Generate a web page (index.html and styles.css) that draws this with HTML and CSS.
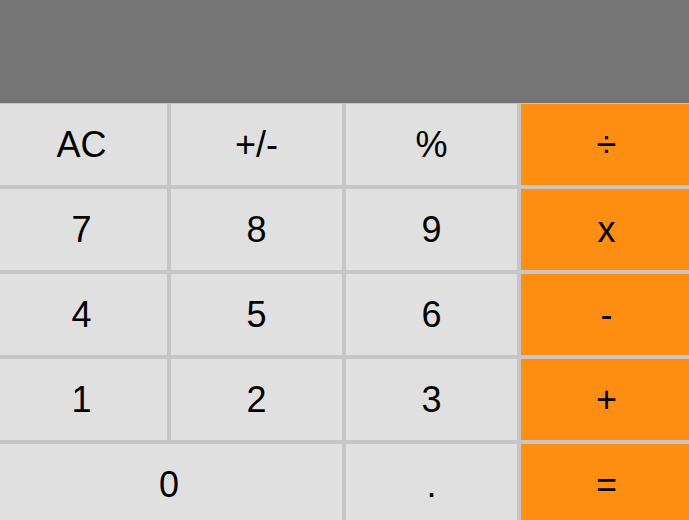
FILE: index.html
```html
<!DOCTYPE html>
<html lang="en">
<head>
  <meta charset="UTF-8">
  <meta name="viewport" content="width=device-width, initial-scale=1.0">
  <title>Calculator</title>
  <link rel="stylesheet" href="styles.css">
</head>
<body>
  <div class="calculator">
    <!-- Display -->
    <div class="display"></div>

    <!-- Keys -->
    <div class="keys">
      <button class="key">AC</button>
      <button class="key">+/-</button>
      <button class="key">%</button>
      <button class="key operator">÷</button>

      <button class="key">7</button>
      <button class="key">8</button>
      <button class="key">9</button>
      <button class="key operator">x</button>

      <button class="key">4</button>
      <button class="key">5</button>
      <button class="key">6</button>
      <button class="key operator">-</button>

      <button class="key">1</button>
      <button class="key">2</button>
      <button class="key">3</button>
      <button class="key operator">+</button>

      <button class="key zero">0</button>
      <button class="key">.</button>
      <button class="key operator">=</button>
    </div>
  </div>
</body>
</html>
```

FILE: styles.css
```css
body {
  margin: 0;
  padding: 0;
  font-family: "Liberation Sans", Arial, sans-serif;
  background-color: #c6c6c6;
  overflow: hidden;
}

.calculator {
  width: 100%;
  overflow: hidden;
}

.display {
  height: 103px;
  background-color: #757575;
}

/* keys are a bit wider than the window, first and last column get clipped */
.keys {
  display: grid;
  grid-template-columns: repeat(4, 171px);
  grid-auto-rows: 81px;
  gap: 4px;
  padding-top: 1px;
  margin-left: -4px;
  background-color: #c6c6c6;
}

.key {
  border: none;
  margin: 0;
  padding: 0;
  background-color: #e0e0e0;
  color: #000;
  font-family: "Liberation Sans", Arial, sans-serif;
  font-size: 36px;
  cursor: pointer;
}

.key.operator {
  background-color: #fd8e12;
}

.key.zero {
  grid-column: span 2;
}
```
